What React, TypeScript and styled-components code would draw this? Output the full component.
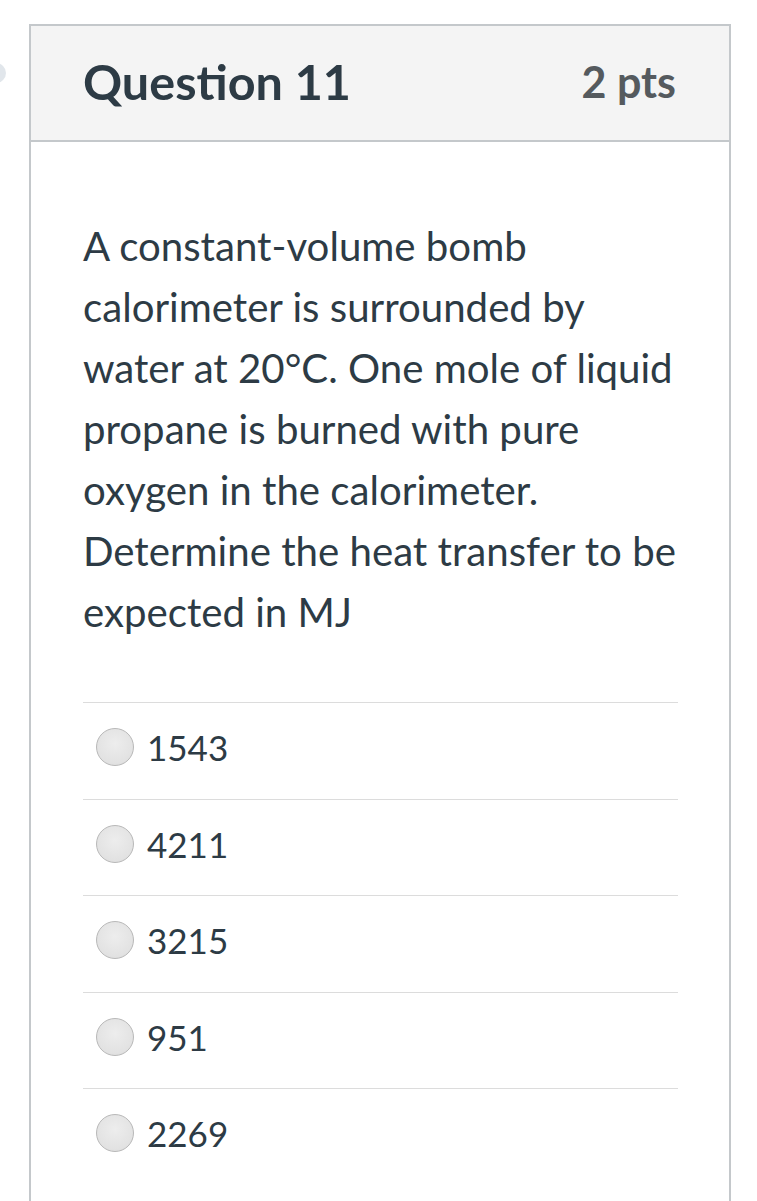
import React from "react";
import styled, { createGlobalStyle } from "styled-components";

const Global = createGlobalStyle`
  html, body { margin: 0; padding: 0; background: #fff; }
  body { font-family: Lato, "Open Sans", sans-serif; color: #2d3b45; }
`;

const Page = styled.div`
  position: relative;
  padding: 24px 26px 0 29px;
  height: 1201px;
  box-sizing: border-box;
  overflow: hidden;
`;

const EdgeNub = styled.div`
  position: absolute;
  left: -14px;
  top: 63px;
  width: 20px;
  height: 20px;
  border-radius: 50%;
  background: #cdd6de;
  opacity: 0.6;
`;

const Card = styled.section`
  border: 2px solid #c4c8cb;
  border-bottom: none;
  min-height: 1300px;
  box-sizing: border-box;
`;

const Header = styled.header`
  display: flex;
  align-items: center;
  justify-content: space-between;
  height: 114px;
  padding: 0 53px 0 52px;
  background: #f4f4f4;
  border-bottom: 2px solid #c4c8cb;
`;

const Title = styled.h2`
  margin: 0 0 4px;
  font-family: Lato, sans-serif;
  font-weight: 700;
  font-size: 48.5px;
  color: #2d3b45;
`;

const Points = styled.span`
  margin-bottom: 4px;
  font-family: Lato, sans-serif;
  font-weight: 700;
  font-size: 43px;
  color: #555a5e;
`;

const Body = styled.div`
  padding: 73px 51px 0 52px;
`;

const Question = styled.p`
  margin: 0 0 60px;
  font-size: 40.2px;
  line-height: 61px;
  color: #2d3b45;
`;

const Answers = styled.ul`
  list-style: none;
  margin: 0;
  padding: 0;
`;

const Answer = styled.li`
  display: flex;
  align-items: center;
  gap: 13px;
  height: 96.5px;
  box-sizing: border-box;
  padding: 0 0 7px 13px;
  border-top: 1.5px solid #dcdcdc;
`;

const Radio = styled.span`
  width: 38px;
  height: 38px;
  box-sizing: border-box;
  border-radius: 50%;
  border: 1.5px solid #b8b8b8;
  background: radial-gradient(circle at 50% 40%, #ededed 0%, #e2e2e2 70%, #d6d6d6 100%);
  flex: none;
`;

const AnswerText = styled.span`
  font-family: Lato, sans-serif;
  font-size: 35px;
  color: #2d3b45;
`;

const answers = ["1543", "4211", "3215", "951", "2269"];

export default function App() {
  return (
    <>
      <Global />
      <Page>
        <EdgeNub />
        <Card>
          <Header>
            <Title>Question 11</Title>
            <Points>2 pts</Points>
          </Header>
          <Body>
            <Question>
              A constant-volume bomb calorimeter is surrounded by water at 20°C. One mole of liquid propane is burned
              with pure oxygen in the calorimeter. Determine the heat transfer to be expected in MJ
            </Question>
            <Answers>
              {answers.map((a) => (
                <Answer key={a}>
                  <Radio />
                  <AnswerText>{a}</AnswerText>
                </Answer>
              ))}
            </Answers>
          </Body>
        </Card>
      </Page>
    </>
  );
}
